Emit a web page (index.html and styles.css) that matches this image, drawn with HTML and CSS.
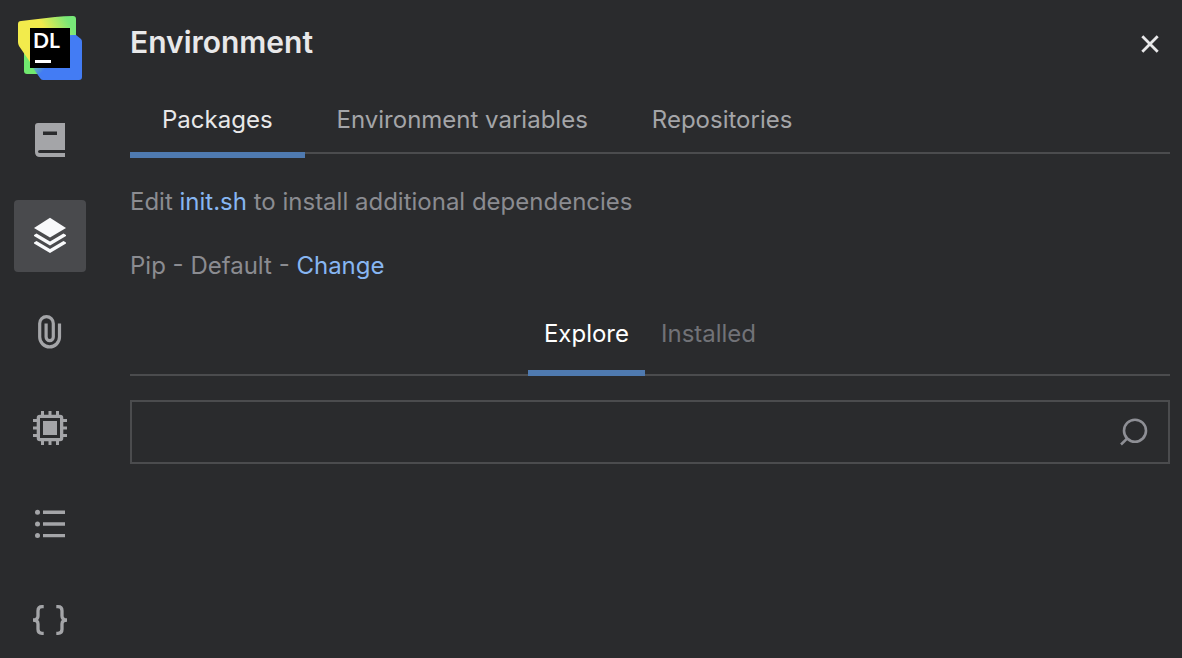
FILE: index.html
```
<!DOCTYPE html>
<html lang="en">
<head>
  <meta charset="UTF-8">
  <meta name="viewport" content="width=device-width, initial-scale=1.0">
  <title>Environment</title>
  <link rel="stylesheet" href="styles.css">
</head>
<body>
  <nav class="sidebar" aria-label="Tools">
    <a href="#" class="logo" aria-label="Home">
      <svg width="64" height="64" viewBox="0 0 64 64">
        <defs>
          <linearGradient id="logoGreen" x1="30" y1="20" x2="52" y2="8" gradientUnits="userSpaceOnUse">
            <stop offset="0" stop-color="#f2eb4c"/>
            <stop offset="1" stop-color="#78e878"/>
          </linearGradient>
          <linearGradient id="logoBlue" x1="14" y1="44" x2="26" y2="54" gradientUnits="userSpaceOnUse">
            <stop offset="0" stop-color="#7ee87a"/>
            <stop offset="1" stop-color="#437cf4"/>
          </linearGradient>
        </defs>
        <path d="M6 34h14v24H9a3 3 0 0 1-3-3z" fill="#71e96f"/>
        <path d="M3 5 37 1Q46 0 55 0a3 3 0 0 1 3 3v29L12 46 1 30Q0 28 0 26V8Q0 5 3 5z" fill="url(#logoGreen)"/>
        <path d="M50 19h8l5 4q1 1 1 3v35a3 3 0 0 1-3 3H25q-2 0-3-2l-9-13z" fill="url(#logoBlue)"/>
        <path d="M12 12h40v40H12z"/>
        <path d="M17 44h16v3H17z" fill="#fff"/>
        <text x="15" y="32" class="logo-text">DL</text>
      </svg>
    </a>
    <button type="button" class="nav-item" aria-label="Notebook">
      <svg width="40" height="40" viewBox="0 0 40 40" fill="currentColor">
        <path fill-rule="evenodd" d="M8 3h27v27H10q-2 0-2 1.500t2 1.500h25v4H10q-5 0-5-5V6q0-3 3-3zM13 11.500v3.500h14v-3.500z"/>
      </svg>
    </button>
    <button type="button" class="nav-item active" aria-label="Environment">
      <svg width="40" height="40" viewBox="0 0 40 40" fill="currentColor">
        <path d="M20 1.800 36 12 20 21.500 4 12z"/>
        <path d="M4 19 6.500 17.500 20 25.500 33.500 17.500 36 19v1L20 29.500 4 20zM4 26.500 6.500 25 20 33 33.500 25l2.500 1.500v1L20 37 4 27.500z"/>
      </svg>
    </button>
    <button type="button" class="nav-item" aria-label="Attached files">
      <svg width="40" height="40" viewBox="0 0 40 40" fill="none" stroke="currentColor" stroke-width="3.200">
        <path d="M29.500 11.500v13.500a9.900 9.900 0 0 1-19.800 0V11.500a6.800 6.800 0 0 1 13.600 0v13.500a3.600 3.600 0 0 1-7.200 0V11.500"/>
      </svg>
    </button>
    <button type="button" class="nav-item" aria-label="Machine">
      <svg width="40" height="40" viewBox="0 0 40 40" fill="currentColor">
        <path fill-rule="evenodd" d="M10 6.700h20a3.300 3.300 0 0 1 3.300 3.300v20a3.300 3.300 0 0 1-3.300 3.300H10a3.300 3.300 0 0 1-3.300-3.300V10a3.300 3.300 0 0 1 3.300-3.300zM10 10v20h20V10z"/>
        <path d="M13 13h14v14H13z"/>
        <path d="M11 3h3v4h-3zM18.500 3h3v4h-3zM26 3h3v4h-3zM11 33h3v4h-3zM18.500 33h3v4h-3zM26 33h3v4h-3zM3 11h4v3H3zM3 18.500h4v3H3zM3 26h4v3H3zM33 11h4v3h-4zM33 18.500h4v3h-4zM33 26h4v3h-4z"/>
      </svg>
    </button>
    <button type="button" class="nav-item" aria-label="Table of contents">
      <svg width="40" height="40" viewBox="0 0 40 40" fill="currentColor">
        <circle cx="7.500" cy="8.300" r="2.500"/>
        <circle cx="7.500" cy="20" r="2.500"/>
        <circle cx="7.500" cy="31.600" r="2.500"/>
        <path d="M13 6.500h22V10H13zM13 18.200h22v3.600H13zM13 30h22v3.300H13z"/>
      </svg>
    </button>
    <button type="button" class="nav-item" aria-label="Variables">
      <svg width="40" height="40" viewBox="0 0 40 40" fill="none" stroke="currentColor" stroke-width="3.300">
        <path d="M13.700 6.700H12q-4 0-4 4V16q0 4-5 4 5 0 5 4v5.300q0 4 4 4h1.700M26.300 6.700H28q4 0 4 4V16q0 4 5 4-5 0-5 4v5.300q0 4-4 4h-1.700"/>
      </svg>
    </button>
  </nav>

  <main class="panel">
    <header class="panel-header">
      <h1 class="panel-title">Environment</h1>
      <button type="button" class="btn-close" aria-label="Close">
        <svg width="24" height="24" viewBox="0 0 24 24" fill="none" stroke="currentColor" stroke-width="2.800">
          <path d="M4.300 4.300l15.400 15.400M19.700 4.300 4.300 19.700"/>
        </svg>
      </button>
    </header>

    <div class="tabs" role="tablist">
      <button type="button" class="tab active" role="tab" aria-selected="true">Packages</button>
      <button type="button" class="tab" role="tab" aria-selected="false">Environment variables</button>
      <button type="button" class="tab" role="tab" aria-selected="false">Repositories</button>
    </div>

    <p class="note">Edit <a href="#">init.sh</a> to install additional dependencies</p>
    <p class="note">Pip - Default - <a href="#">Change</a></p>

    <div class="subtabs" role="tablist">
      <button type="button" class="subtab active" role="tab" aria-selected="true">Explore</button>
      <button type="button" class="subtab" role="tab" aria-selected="false">Installed</button>
    </div>

    <form class="search">
      <input type="text" class="search-input" aria-label="Search packages">
      <button type="submit" class="btn-search" aria-label="Search">
        <svg width="32" height="32" viewBox="0 0 32 32" fill="none" stroke="currentColor" stroke-width="2.600">
          <circle cx="17" cy="14.700" r="11"/>
          <path d="M9.300 22.400 3 28.500"/>
        </svg>
      </button>
    </form>
  </main>
</body>
</html>
```
FILE: styles.css
```
:root {
  --background: #2a2b2d;
  --active-item: #494a4d;
  --line: #4b4c4e;
  --accent: #4f7ab0;
  --link: #87b6f2;
  --icon: #a4a5a8;
  --text: #e8e8e9;
  --text-muted: #8b8c91;
}

* {
  box-sizing: border-box;
}

body {
  margin: 0;
  min-height: 100vh;
  display: flex;
  background-color: var(--background);
  color: var(--text);
  font-family: Inter, "Liberation Sans", sans-serif;
  font-size: 24px;
  line-height: 32px;
}

button {
  border: none;
  padding: 0;
  background: none;
  color: inherit;
  font: inherit;
  cursor: pointer;
}

svg {
  display: block;
}

.sidebar {
  flex: none;
  width: 100px;
  padding-top: 16px;
  display: flex;
  flex-direction: column;
  align-items: center;
  gap: 24px;
}

.logo-text {
  fill: white;
  font-family: Lato, sans-serif;
  font-size: 21px;
  font-weight: 700;
}

.nav-item {
  width: 72px;
  height: 72px;
  display: flex;
  align-items: center;
  justify-content: center;
  border-radius: 4px;
  color: var(--icon);
}

.nav-item.active {
  background-color: var(--active-item);
  color: #f8f9fb;
}

.panel {
  flex: 1;
  min-width: 0;
  padding: 22px 12px 0 30px;
}

.panel-header {
  display: flex;
  align-items: flex-end;
  justify-content: space-between;
  padding-right: 8px;
}

.panel-title {
  margin: 0;
  font-size: 30px;
  line-height: 40px;
  font-weight: 600;
}

.btn-close {
  padding-bottom: 6px;
}

.tabs {
  display: flex;
  height: 92px;
  align-items: flex-end;
  box-shadow: inset 0 -2px var(--line);
}

.tab {
  height: 54px;
  margin-bottom: -4px;
  padding: 0 32px 22px;
  border-bottom: 6px solid transparent;
  color: var(--icon);
}

.tab.active {
  border-color: var(--accent);
  color: var(--text);
}

.note {
  margin: 32px 0 0;
  color: var(--text-muted);
}

.note a {
  color: var(--link);
  text-decoration: none;
}

.subtabs {
  display: flex;
  justify-content: center;
  margin-top: 36px;
  border-bottom: 2px solid var(--line);
}

.subtab {
  margin-bottom: -2px;
  padding: 0 16px 20px;
  border-bottom: 6px solid transparent;
  color: #717277;
}

.subtab.active {
  border-color: var(--accent);
  color: white;
}

.search {
  display: flex;
  align-items: center;
  height: 64px;
  margin-top: 24px;
  padding-right: 18px;
  border: 2px solid var(--line);
}

.search-input {
  flex: 1;
  min-width: 0;
  height: 100%;
  padding: 0 16px;
  border: none;
  outline: none;
  background: none;
  color: var(--text);
  font: inherit;
}

.btn-search {
  color: #8e8f95;
}
```
